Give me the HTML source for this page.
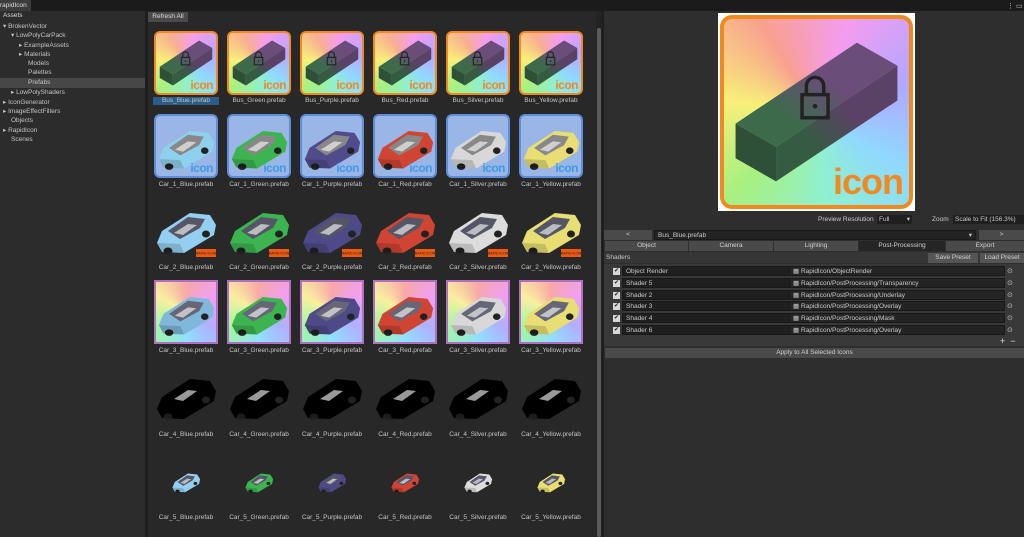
<!DOCTYPE html>
<html><head><meta charset="utf-8">
<style>
*{margin:0;padding:0;box-sizing:border-box}
body{width:1024px;height:537px;background:#282828;font-family:"Liberation Sans",sans-serif;font-size:7px;color:#c8c8c8;position:relative;overflow:hidden}
.a{position:absolute}
.t{position:absolute;width:64px;height:64px}
.l{position:absolute;width:72px;text-align:center;font-size:6.5px;color:#c4c4c4;white-space:nowrap}
.r1{border:2px solid #f08a20;border-radius:6px;background:conic-gradient(from 20deg,#f49cf0,#b8a8ff,#90d8ff,#90f0d0,#a8f080,#f8f07a,#f8b090,#f49cf0)}
.r2{border:2px solid #5f8ed8;border-radius:6px;background:#9ab6e6}
.r4{border:2px solid #b070c0;background:conic-gradient(from 0deg,#f8a8a8,#f0a0f0,#b0b0ff,#90e0ff,#a0f8a0,#f8f0a0,#f8a8a8)}
.ic{position:absolute;right:3px;bottom:1px;font-weight:bold;font-size:12px;letter-spacing:-0.5px}
.tree div{position:absolute;font-size:6.5px;color:#c4c4c4}
.row{position:absolute;left:604px;width:418px;height:11px}
.fld{position:absolute;background:#1f1f1f;border:1px solid #181818;height:10px;font-size:6.5px;line-height:9px;padding-left:3px;color:#c8c8c8}
.btn{position:absolute;background:#4a4a4a;height:10px;font-size:6.5px;line-height:10px;text-align:center;color:#d0d0d0}
.ck{position:absolute;left:9px;width:7px;height:7px;background:#d8d8d8;top:2px;font-size:6px;line-height:7px;color:#222;text-align:center}
</style></head><body>
<svg width="0" height="0" style="position:absolute">
<defs>
<linearGradient id="bg1" x1="0" y1="1" x2="1" y2="0"><stop offset="0.3" stop-color="#3e6a4c"/><stop offset="0.6" stop-color="#6a4d78"/></linearGradient>
<linearGradient id="bg2" x1="0" y1="1" x2="1" y2="0"><stop offset="0.3" stop-color="#355c42"/><stop offset="0.6" stop-color="#5a4266"/></linearGradient>
<g id="bus"><path d="M4,36 L46,8 L60,16 L18,44Z" fill="url(#bg1)"/><path d="M18,44 L60,16 L60,28 L18,56Z" fill="url(#bg2)"/><path d="M4,36 L18,44 L18,56 L4,48Z" fill="#2f5038"/><rect x="27" y="26" width="9" height="8" fill="none" stroke="#222" stroke-width="1.2"/><path d="M28.5,26 v-3 a3,3 0 0 1 6,0 v3" fill="none" stroke="#222" stroke-width="1.2"/><circle cx="31.5" cy="30" r="0.8" fill="#222"/></g>
<g id="car"><path d="M3,46 L8,34 L36,16 L56,18 L62,28 L60,38 L30,56 L8,55Z" fill="var(--c)"/><path d="M14,34 L34,20 L51,22 L46,31 L26,42Z" fill="var(--w)"/><path d="M20,36 L34,27 L43,28 L29,38Z" fill="#ffffff" opacity=".6"/><ellipse cx="14" cy="54" rx="4.5" ry="3.5" fill="#222"/><ellipse cx="52" cy="37" rx="4" ry="3.5" fill="#222"/><path d="M3,46 L8,55 L30,56 L26,47Z" fill="#000" opacity=".15"/></g>
</defs></svg>

<!-- top bar -->
<div class="a" style="left:0;top:0;width:1024px;height:11px;background:#1b1b1b"></div>
<div class="a" style="left:0;top:0;width:31px;height:11px;background:#3c3c3c;font-size:6.5px;line-height:11px;color:#ddd">rapidIcon</div>
<div class="a" style="left:1007px;top:2px;font-size:7px;color:#ccc">⋮ ▭</div>
<!-- left panel -->
<div class="a" style="left:0;top:11px;width:145px;height:526px;background:#2c2c2c"></div>
<div class="a" style="left:145px;top:11px;width:3px;height:526px;background:#1e1e1e"></div>
<div class="a" style="left:0;top:78px;width:145px;height:10px;background:#474747"></div>
<div class="tree">
<div style="left:3px;top:12px;color:#ddd">Assets</div>
<div style="left:3px;top:22px">▾ BrokenVector</div>
<div style="left:11px;top:31px">▾ LowPolyCarPack</div>
<div style="left:19px;top:41px">▸ ExampleAssets</div>
<div style="left:19px;top:50px">▸ Materials</div>
<div style="left:28px;top:60px">Models</div>
<div style="left:28px;top:69px">Palettes</div>
<div style="left:28px;top:79px">Prefabs</div>
<div style="left:11px;top:88px">▸ LowPolyShaders</div>
<div style="left:3px;top:98px">▸ IconGenerator</div>
<div style="left:3px;top:107px">▸ ImageEffectFilters</div>
<div style="left:11px;top:117px">Objects</div>
<div style="left:3px;top:126px">▸ RapidIcon</div>
<div style="left:11px;top:136px">Scenes</div>
</div>
<!-- grid area -->
<div class="a" style="left:148px;top:12px;width:40px;height:10px;background:#4a4a4a;font-size:6.5px;line-height:10px;text-align:center;color:#ddd">Refresh All</div>
<div class="a" style="left:596px;top:11px;width:6px;height:526px;background:#232323"></div>
<div class="a" style="left:597px;top:28px;width:4px;height:509px;background:#5a5a5a;border-radius:2px"></div>
<div class="a" style="left:602px;top:11px;width:2px;height:526px;background:#1e1e1e"></div>

<!-- row1 -->
<div class="t r1" style="left:154px;top:31px"><svg width="60" height="60" viewBox="0 0 64 64"><use href="#bus"/></svg><span class="ic" style="color:#f08a20">icon</span></div>
<div class="t r1" style="left:227px;top:31px"><svg width="60" height="60" viewBox="0 0 64 64"><use href="#bus"/></svg><span class="ic" style="color:#f08a20">icon</span></div>
<div class="t r1" style="left:300px;top:31px"><svg width="60" height="60" viewBox="0 0 64 64"><use href="#bus"/></svg><span class="ic" style="color:#f08a20">icon</span></div>
<div class="t r1" style="left:373px;top:31px"><svg width="60" height="60" viewBox="0 0 64 64"><use href="#bus"/></svg><span class="ic" style="color:#f08a20">icon</span></div>
<div class="t r1" style="left:446px;top:31px"><svg width="60" height="60" viewBox="0 0 64 64"><use href="#bus"/></svg><span class="ic" style="color:#f08a20">icon</span></div>
<div class="t r1" style="left:519px;top:31px"><svg width="60" height="60" viewBox="0 0 64 64"><use href="#bus"/></svg><span class="ic" style="color:#f08a20">icon</span></div>
<div class="a" style="left:153px;top:97px;width:66px;height:8px;background:#2c5d87"></div>
<div class="l" style="left:150px;top:97px">Bus_Blue.prefab</div>
<div class="l" style="left:223px;top:97px">Bus_Green.prefab</div>
<div class="l" style="left:296px;top:97px">Bus_Purple.prefab</div>
<div class="l" style="left:369px;top:97px">Bus_Red.prefab</div>
<div class="l" style="left:442px;top:97px">Bus_Silver.prefab</div>
<div class="l" style="left:515px;top:97px">Bus_Yellow.prefab</div>

<!-- row2 -->
<div class="t r2" style="left:154px;top:114px"><svg width="60" height="60" viewBox="0 0 64 64" style="--c:#8ed0ee;--w:#888"><use href="#car"/></svg><span class="ic" style="color:#3f9ae8">icon</span></div>
<div class="t r2" style="left:227px;top:114px"><svg width="60" height="60" viewBox="0 0 64 64" style="--c:#3cb450;--w:#888"><use href="#car"/></svg><span class="ic" style="color:#3f9ae8">icon</span></div>
<div class="t r2" style="left:300px;top:114px"><svg width="60" height="60" viewBox="0 0 64 64" style="--c:#504c8c;--w:#888"><use href="#car"/></svg><span class="ic" style="color:#3f9ae8">icon</span></div>
<div class="t r2" style="left:373px;top:114px"><svg width="60" height="60" viewBox="0 0 64 64" style="--c:#d04434;--w:#888"><use href="#car"/></svg><span class="ic" style="color:#3f9ae8">icon</span></div>
<div class="t r2" style="left:446px;top:114px"><svg width="60" height="60" viewBox="0 0 64 64" style="--c:#d8d8d8;--w:#888"><use href="#car"/></svg><span class="ic" style="color:#3f9ae8">icon</span></div>
<div class="t r2" style="left:519px;top:114px"><svg width="60" height="60" viewBox="0 0 64 64" style="--c:#e8de74;--w:#888"><use href="#car"/></svg><span class="ic" style="color:#3f9ae8">icon</span></div>
<div class="l" style="left:150px;top:181px">Car_1_Blue.prefab</div>
<div class="l" style="left:223px;top:181px">Car_1_Green.prefab</div>
<div class="l" style="left:296px;top:181px">Car_1_Purple.prefab</div>
<div class="l" style="left:369px;top:181px">Car_1_Red.prefab</div>
<div class="l" style="left:442px;top:181px">Car_1_Silver.prefab</div>
<div class="l" style="left:515px;top:181px">Car_1_Yellow.prefab</div>

<!-- row3 -->
<div class="t" style="left:154px;top:197px"><svg width="64" height="64" viewBox="0 0 64 64" style="--c:#94cef0;--w:#556"><use href="#car"/><rect x="42" y="52" width="20" height="8" fill="#f05a10"/><text x="52" y="57.5" font-size="3.5" text-anchor="middle" fill="#222" font-family="Liberation Sans">RAPID ICON</text></svg></div>
<div class="t" style="left:227px;top:197px"><svg width="64" height="64" viewBox="0 0 64 64" style="--c:#3cb450;--w:#556"><use href="#car"/><rect x="42" y="52" width="20" height="8" fill="#f05a10"/><text x="52" y="57.5" font-size="3.5" text-anchor="middle" fill="#222" font-family="Liberation Sans">RAPID ICON</text></svg></div>
<div class="t" style="left:300px;top:197px"><svg width="64" height="64" viewBox="0 0 64 64" style="--c:#4e4a88;--w:#556"><use href="#car"/><rect x="42" y="52" width="20" height="8" fill="#f05a10"/><text x="52" y="57.5" font-size="3.5" text-anchor="middle" fill="#222" font-family="Liberation Sans">RAPID ICON</text></svg></div>
<div class="t" style="left:373px;top:197px"><svg width="64" height="64" viewBox="0 0 64 64" style="--c:#d04434;--w:#556"><use href="#car"/><rect x="42" y="52" width="20" height="8" fill="#f05a10"/><text x="52" y="57.5" font-size="3.5" text-anchor="middle" fill="#222" font-family="Liberation Sans">RAPID ICON</text></svg></div>
<div class="t" style="left:446px;top:197px"><svg width="64" height="64" viewBox="0 0 64 64" style="--c:#dcdcdc;--w:#556"><use href="#car"/><rect x="42" y="52" width="20" height="8" fill="#f05a10"/><text x="52" y="57.5" font-size="3.5" text-anchor="middle" fill="#222" font-family="Liberation Sans">RAPID ICON</text></svg></div>
<div class="t" style="left:519px;top:197px"><svg width="64" height="64" viewBox="0 0 64 64" style="--c:#e8de74;--w:#556"><use href="#car"/><rect x="42" y="52" width="20" height="8" fill="#f05a10"/><text x="52" y="57.5" font-size="3.5" text-anchor="middle" fill="#222" font-family="Liberation Sans">RAPID ICON</text></svg></div>
<div class="l" style="left:150px;top:264px">Car_2_Blue.prefab</div>
<div class="l" style="left:223px;top:264px">Car_2_Green.prefab</div>
<div class="l" style="left:296px;top:264px">Car_2_Purple.prefab</div>
<div class="l" style="left:369px;top:264px">Car_2_Red.prefab</div>
<div class="l" style="left:442px;top:264px">Car_2_Silver.prefab</div>
<div class="l" style="left:515px;top:264px">Car_2_Yellow.prefab</div>

<!-- row4 -->
<div class="t r4" style="left:154px;top:280px"><svg width="60" height="60" viewBox="0 0 64 64" style="--c:#80b8dc;--w:#667"><use href="#car"/></svg></div>
<div class="t r4" style="left:227px;top:280px"><svg width="60" height="60" viewBox="0 0 64 64" style="--c:#3cb450;--w:#667"><use href="#car"/></svg></div>
<div class="t r4" style="left:300px;top:280px"><svg width="60" height="60" viewBox="0 0 64 64" style="--c:#4e4a88;--w:#667"><use href="#car"/></svg></div>
<div class="t r4" style="left:373px;top:280px"><svg width="60" height="60" viewBox="0 0 64 64" style="--c:#d04434;--w:#667"><use href="#car"/></svg></div>
<div class="t r4" style="left:446px;top:280px"><svg width="60" height="60" viewBox="0 0 64 64" style="--c:#d8d8d8;--w:#667"><use href="#car"/></svg></div>
<div class="t r4" style="left:519px;top:280px"><svg width="60" height="60" viewBox="0 0 64 64" style="--c:#e8de74;--w:#667"><use href="#car"/></svg></div>
<div class="l" style="left:150px;top:347px">Car_3_Blue.prefab</div>
<div class="l" style="left:223px;top:347px">Car_3_Green.prefab</div>
<div class="l" style="left:296px;top:347px">Car_3_Purple.prefab</div>
<div class="l" style="left:369px;top:347px">Car_3_Red.prefab</div>
<div class="l" style="left:442px;top:347px">Car_3_Silver.prefab</div>
<div class="l" style="left:515px;top:347px">Car_3_Yellow.prefab</div>

<!-- row5 -->
<div class="t" style="left:154px;top:363px"><svg width="64" height="64" viewBox="0 0 64 64" style="--c:#000;--w:#000"><use href="#car"/></svg></div>
<div class="t" style="left:227px;top:363px"><svg width="64" height="64" viewBox="0 0 64 64" style="--c:#000;--w:#000"><use href="#car"/></svg></div>
<div class="t" style="left:300px;top:363px"><svg width="64" height="64" viewBox="0 0 64 64" style="--c:#000;--w:#000"><use href="#car"/></svg></div>
<div class="t" style="left:373px;top:363px"><svg width="64" height="64" viewBox="0 0 64 64" style="--c:#000;--w:#000"><use href="#car"/></svg></div>
<div class="t" style="left:446px;top:363px"><svg width="64" height="64" viewBox="0 0 64 64" style="--c:#000;--w:#000"><use href="#car"/></svg></div>
<div class="t" style="left:519px;top:363px"><svg width="64" height="64" viewBox="0 0 64 64" style="--c:#000;--w:#000"><use href="#car"/></svg></div>
<div class="l" style="left:150px;top:431px">Car_4_Blue.prefab</div>
<div class="l" style="left:223px;top:431px">Car_4_Green.prefab</div>
<div class="l" style="left:296px;top:431px">Car_4_Purple.prefab</div>
<div class="l" style="left:369px;top:431px">Car_4_Red.prefab</div>
<div class="l" style="left:442px;top:431px">Car_4_Silver.prefab</div>
<div class="l" style="left:515px;top:431px">Car_4_Yellow.prefab</div>

<!-- row6 -->
<div class="t" style="left:171px;top:466px"><svg width="30" height="30" viewBox="0 0 64 64" style="--c:#94cef0;--w:#556"><use href="#car"/></svg></div>
<div class="t" style="left:244px;top:466px"><svg width="30" height="30" viewBox="0 0 64 64" style="--c:#3cb450;--w:#556"><use href="#car"/></svg></div>
<div class="t" style="left:317px;top:466px"><svg width="30" height="30" viewBox="0 0 64 64" style="--c:#4e4a88;--w:#556"><use href="#car"/></svg></div>
<div class="t" style="left:390px;top:466px"><svg width="30" height="30" viewBox="0 0 64 64" style="--c:#d04434;--w:#556"><use href="#car"/></svg></div>
<div class="t" style="left:463px;top:466px"><svg width="30" height="30" viewBox="0 0 64 64" style="--c:#dcdcdc;--w:#556"><use href="#car"/></svg></div>
<div class="t" style="left:536px;top:466px"><svg width="30" height="30" viewBox="0 0 64 64" style="--c:#e8de74;--w:#556"><use href="#car"/></svg></div>
<div class="l" style="left:150px;top:514px">Car_5_Blue.prefab</div>
<div class="l" style="left:223px;top:514px">Car_5_Green.prefab</div>
<div class="l" style="left:296px;top:514px">Car_5_Purple.prefab</div>
<div class="l" style="left:369px;top:514px">Car_5_Red.prefab</div>
<div class="l" style="left:442px;top:514px">Car_5_Silver.prefab</div>
<div class="l" style="left:515px;top:514px">Car_5_Yellow.prefab</div>

<!-- right panel -->
<div class="a" style="left:604px;top:11px;width:420px;height:526px;background:#2e2e2e"></div>
<div class="a" style="left:718px;top:13px;width:197px;height:198px;background:#fff"></div>
<div class="a" style="left:720px;top:15px;width:193px;height:194px;border:4px solid #f08a20;border-radius:12px;background:conic-gradient(from 20deg,#f49cf0,#b0a8ff,#90d8ff,#90f0d0,#a8f080,#f8f07a,#f8a090,#f49cf0)">
<svg width="185" height="186" viewBox="0 0 64 64" style="position:absolute;left:0;top:0"><use href="#bus"/></svg>
<span style="position:absolute;right:6px;bottom:2px;font-weight:bold;font-size:36px;color:#f08a20;letter-spacing:-1px">icon</span></div>
<div class="a" style="left:818px;top:216px;font-size:6.5px">Preview Resolution</div>
<div class="a" style="left:877px;top:215px;width:35px;height:9px;background:#1f1f1f;font-size:6.5px;line-height:9px;padding-left:2px">Full <span style="float:right;padding-right:2px">▾</span></div>
<div class="a" style="left:932px;top:216px;font-size:6.5px">Zoom</div>
<div class="a" style="left:953px;top:215px;width:71px;height:9px;background:#1f1f1f;font-size:6.5px;line-height:9px;padding-left:2px">Scale to Fit (156.3%)</div>
<div class="btn" style="left:604px;top:230px;width:48px">&lt;</div>
<div class="fld" style="left:654px;top:230px;width:322px;background:#242424">Bus_Blue.prefab<span style="float:right;padding-right:3px">▾</span></div>
<div class="btn" style="left:979px;top:230px;width:45px">&gt;</div>
<div class="btn" style="left:605px;top:241px;width:83px">Object</div>
<div class="btn" style="left:689px;top:241px;width:84px">Camera</div>
<div class="btn" style="left:774px;top:241px;width:84px">Lighting</div>
<div class="btn" style="left:859px;top:241px;width:86px;background:#252525">Post-Processing</div>
<div class="btn" style="left:946px;top:241px;width:78px">Export</div>
<div class="a" style="left:604px;top:252px;width:420px;height:11px;background:#363636"></div>
<div class="a" style="left:606px;top:254px;font-size:6.5px">Shaders</div>
<div class="btn" style="left:928px;top:253px;width:50px;background:#555">Save Preset</div>
<div class="btn" style="left:980px;top:253px;width:44px;background:#555">Load Preset</div>
<div class="a" style="left:604px;top:264px;width:420px;height:82px;background:#393939"></div>

<div class="row" style="top:266px"><div class="ck">✔</div><div class="fld" style="left:18px;width:168px">Object Render</div><div class="fld" style="left:185px;width:216px;background:#242424">▦ RapidIcon/ObjectRender</div><div class="a" style="left:403px;top:1px">⊙</div></div>
<div class="row" style="top:278px"><div class="ck">✔</div><div class="fld" style="left:18px;width:168px">Shader 5</div><div class="fld" style="left:185px;width:216px;background:#242424">▦ RapidIcon/PostProcessing/Transparency</div><div class="a" style="left:403px;top:1px">⊙</div></div>
<div class="row" style="top:290px"><div class="ck">✔</div><div class="fld" style="left:18px;width:168px">Shader 2</div><div class="fld" style="left:185px;width:216px;background:#242424">▦ RapidIcon/PostProcessing/Underlay</div><div class="a" style="left:403px;top:1px">⊙</div></div>
<div class="row" style="top:301px"><div class="ck">✔</div><div class="fld" style="left:18px;width:168px">Shader 3</div><div class="fld" style="left:185px;width:216px;background:#242424">▦ RapidIcon/PostProcessing/Overlay</div><div class="a" style="left:403px;top:1px">⊙</div></div>
<div class="row" style="top:313px"><div class="ck">✔</div><div class="fld" style="left:18px;width:168px">Shader 4</div><div class="fld" style="left:185px;width:216px;background:#242424">▦ RapidIcon/PostProcessing/Mask</div><div class="a" style="left:403px;top:1px">⊙</div></div>
<div class="row" style="top:325px"><div class="ck">✔</div><div class="fld" style="left:18px;width:168px">Shader 6</div><div class="fld" style="left:185px;width:216px;background:#242424">▦ RapidIcon/PostProcessing/Overlay</div><div class="a" style="left:403px;top:1px">⊙</div></div>
<div class="a" style="left:1000px;top:336px;font-size:9px;color:#ddd">+ &nbsp;−</div>
<div class="btn" style="left:605px;top:348px;width:419px">Apply to All Selected Icons</div>
</body></html>
